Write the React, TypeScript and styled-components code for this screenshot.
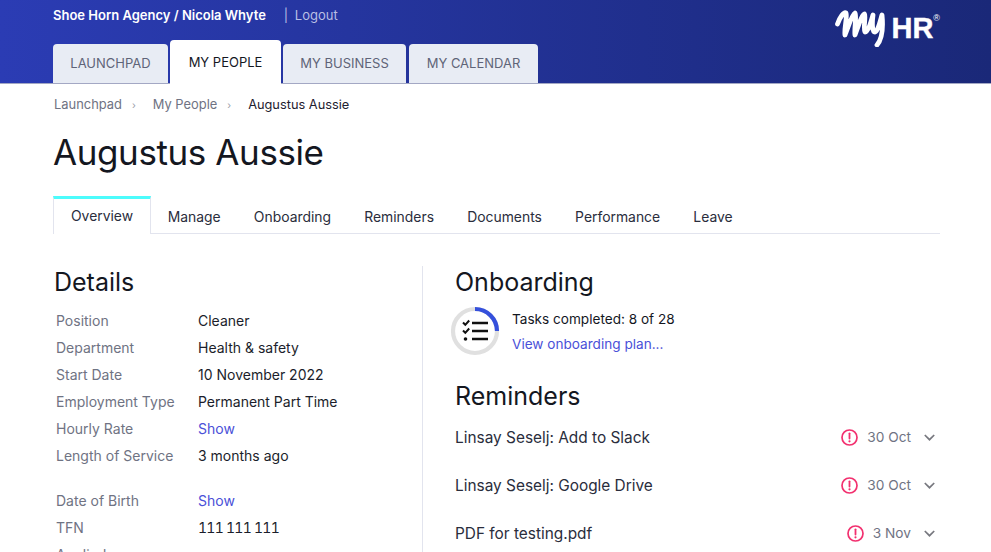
import React from "react";
import styled, { createGlobalStyle } from "styled-components";

const Global = createGlobalStyle`
  html, body { margin: 0; padding: 0; height: 552px; overflow: hidden; background: #fff; }
  body { font-family: Inter, "Liberation Sans", sans-serif; color: #14171f; }
`;

const Page = styled.div`
  width: 991px;
  height: 552px;
  overflow: hidden;
`;

const Header = styled.header`
  height: 84px;
  box-sizing: border-box;
  padding: 0 51px 0 53px;
  display: flex;
  justify-content: space-between;
  background: linear-gradient(90deg, #2b3cb4 0%, #1a2878 100%);
  border-bottom: 1px solid #a3a8c4;
`;

const HeaderLeft = styled.div`
  display: flex;
  flex-direction: column;
`;

const UserLine = styled.div`
  height: 40px;
  padding-top: 7px;
  box-sizing: border-box;
  display: flex;
  font-size: 13px;
  line-height: 16px;
`;

const UserName = styled.span`
  color: #fff;
  font-weight: 600;
`;

const Logout = styled.span`
  margin-left: 18px;
  color: #b9bfe4;
  word-spacing: 3px;
`;

const NavTabs = styled.nav`
  display: flex;
  align-items: flex-end;
  height: 43px;
`;

const NavTab = styled.div<{ $active?: boolean; $w: number; $gap: number }>`
  box-sizing: border-box;
  width: ${(p) => p.$w}px;
  margin-right: ${(p) => p.$gap}px;
  height: ${(p) => (p.$active ? 44 : 39)}px;
  margin-bottom: ${(p) => (p.$active ? -1 : 0)}px;
  padding-bottom: ${(p) => (p.$active ? 0 : 2)}px;
  border-radius: 4px 4px 0 0;
  background: ${(p) => (p.$active ? "#fff" : "#e8ecf4")};
  color: ${(p) => (p.$active ? "#14171f" : "#5f6478")};
  font-size: 13px;
  display: flex;
  align-items: center;
  justify-content: center;
`;

const Logo = styled.div`
  margin-top: 9px;
  display: flex;
  align-items: flex-start;
  height: 38px;
`;

const LogoText = styled.span`
  color: #fff;
  font-family: "Liberation Sans", sans-serif;
  font-weight: 700;
  font-size: 29px;
  line-height: 32px;
  margin-top: 3px;
  -webkit-text-stroke: 0.4px #fff;
`;

const LogoMarkR = styled.span`
  color: #fff;
  font-family: "Liberation Sans", sans-serif;
  font-size: 9px;
  line-height: 10px;
  margin: 4px 0 0 0;
`;

const Main = styled.main`
  padding: 0 51px 0 53px;
`;

const Breadcrumbs = styled.div`
  height: 41px;
  display: flex;
  align-items: center;
  padding-left: 1px;
  font-size: 12.9px;
  color: #6f7383;
`;

const Sep = styled.span`
  margin: 0 17px 0 10px;
  font-size: 10px;
  color: #9a9da8;
`;

const Current = styled.span`
  color: #1e2130;
  font-size: 12.8px;
`;

const Title = styled.h1`
  margin: 0;
  height: 71px;
  font-size: 35px;
  line-height: 54px;
  font-weight: 400;
  letter-spacing: -0.4px;
`;

const TabBar = styled.div`
  display: flex;
  height: 37px;
  border-bottom: 1px solid #e2e4ee;
`;

const Tab = styled.div<{ $active?: boolean }>`
  box-sizing: border-box;
  height: ${(p) => (p.$active ? 38 : 37)}px;
  padding: ${(p) => (p.$active ? "0 17px 2px" : "5px 16.6px 0")};
  display: flex;
  align-items: center;
  font-size: 13.9px;
  color: #2a2d3c;
  ${(p) =>
    p.$active
      ? `background:#fff;border-top:3px solid #4dfcfc;border-left:1px solid #e2e4ee;border-right:1px solid #e2e4ee;`
      : ""}
`;

const Columns = styled.div`
  display: grid;
  grid-template-columns: 370px 1fr;
  margin-top: 32px;
`;

const LeftCol = styled.section`
  border-right: 1px solid #e2e4ee;
  height: 300px;
  padding-left: 1px;
`;

const RightCol = styled.section`
  padding-left: 32px;
`;

const Heading = styled.h2`
  margin: 0;
  font-size: 25px;
  line-height: 32px;
  font-weight: 400;
  color: #14171f;
`;

const Rows = styled.dl<{ $gap?: number }>`
  margin: 0;
  margin-top: ${(p) => p.$gap ?? 0}px;
  display: grid;
  grid-template-columns: 142px 1fr;
  grid-auto-rows: 27px;
  padding-left: 2px;
  font-size: 14px;
  line-height: 27px;
`;

const Label = styled.dt`
  color: #6f7383;
`;

const Value = styled.dd<{ $tabular?: boolean }>`
  margin: 0;
  color: #1b1e2b;
  font-variant-numeric: ${(p) => (p.$tabular ? "tabular-nums" : "normal")};
  letter-spacing: ${(p) => (p.$tabular ? "-0.75px" : "normal")};
`;

const LinkText = styled.span`
  color: #4a50d8;
`;

const Progress = styled.div`
  display: flex;
  align-items: center;
  gap: 12px;
  margin-left: -5px;
  margin-top: 7px;
`;

const ProgressText = styled.div`
  font-size: 13.6px;
  line-height: 25px;
  padding-top: 2px;
`;

const ReminderBlock = styled.div`
  margin-top: 23px;
`;

const ReminderList = styled.div`
  margin-top: 1px;
  padding-right: 5px;
`;

const ReminderRow = styled.div`
  height: 48px;
  display: flex;
  align-items: center;
  font-size: 15.4px;
`;

const ReminderName = styled.span`
  flex: 1;
  color: #2a2d3c;
`;

const ReminderDate = styled.span`
  font-size: 13.7px;
  color: #6f7383;
  margin: 0 13px 0 9px;
`;

const Chevron = () => (
  <svg width="11" height="7" viewBox="0 0 11 7" fill="none" stroke="#77787f" strokeWidth="1.7">
    <path d="M.8 1 5.5 5.7 10.2 1" />
  </svg>
);

const Alert = () => (
  <svg width="17" height="17" viewBox="0 0 17 17" fill="none">
    <circle cx="8.5" cy="8.5" r="7.5" stroke="#f2306f" strokeWidth="1.7" />
    <path d="M8.5 4.3v5.2" stroke="#f2306f" strokeWidth="1.8" strokeLinecap="round" />
    <circle cx="8.5" cy="12.3" r="1.1" fill="#f2306f" />
  </svg>
);

const TaskRing = () => (
  <svg width="50" height="50" viewBox="0 0 50 50" fill="none">
    <circle cx="25" cy="25" r="22" stroke="#e0e0e0" strokeWidth="4.2" />
    <path d="M25 3a22 22 0 0 1 22 22" stroke="#3550dc" strokeWidth="4.2" />
    <path d="M13 16.5l2.3 2.3 3.9-4.3M13 24.5l2.3 2.3 3.9-4.3" stroke="#111" strokeWidth="2" />
    <circle cx="15.5" cy="33" r="1.8" fill="#111" />
    <path d="M22 17h16M22 25h16M22 33h16" stroke="#111" strokeWidth="2.3" />
  </svg>
);

const LogoMark = () => (
  <svg width="56" height="38" viewBox="0 0 56 38" fill="none" stroke="#fff" strokeWidth="4.8" strokeLinecap="round" strokeLinejoin="round">
    <path d="M2.5 15C5 8 9 2.5 11 4 12.5 8 9 20 10 26 13 19 17 5 20 4 22 6 19 20 20 26 23 18 27 5 29.5 5 31 8 28 19 30 23 33 23 36 13 38 6 37 14 37 23 40 23 43 22 45 13 47 6 48 16 48 29 42 36" />
  </svg>
);

const nav = [
  ["LAUNCHPAD", 115, 2],
  ["MY PEOPLE", 111, 2],
  ["MY BUSINESS", 123, 3],
  ["MY CALENDAR", 129, 0],
] as const;

const tabs = ["Overview", "Manage", "Onboarding", "Reminders", "Documents", "Performance", "Leave"];

const reminders = [
  ["Linsay Seselj: Add to Slack", "30 Oct"],
  ["Linsay Seselj: Google Drive", "30 Oct"],
  ["PDF for testing.pdf", "3 Nov"],
];

export default function App() {
  return (
    <Page>
      <Global />
      <Header>
        <HeaderLeft>
          <UserLine>
            <UserName>Shoe Horn Agency / Nicola Whyte</UserName>
            <Logout>| Logout</Logout>
          </UserLine>
          <NavTabs>
            {nav.map(([n, w, g], i) => (
              <NavTab key={n} $w={w} $gap={g} $active={i === 1}>
                {n}
              </NavTab>
            ))}
          </NavTabs>
        </HeaderLeft>
        <Logo>
          <LogoMark />
          <LogoText>HR</LogoText>
          <LogoMarkR>®</LogoMarkR>
        </Logo>
      </Header>
      <Main>
        <Breadcrumbs>
          Launchpad<Sep>›</Sep>My People<Sep>›</Sep>
          <Current>Augustus Aussie</Current>
        </Breadcrumbs>
        <Title>Augustus Aussie</Title>
        <TabBar>
          {tabs.map((t, i) => (
            <Tab key={t} $active={i === 0}>
              {t}
            </Tab>
          ))}
        </TabBar>
        <Columns>
          <LeftCol>
            <Heading>Details</Heading>
            <Rows $gap={9}>
              <Label>Position</Label><Value>Cleaner</Value>
              <Label>Department</Label><Value>Health &amp; safety</Value>
              <Label>Start Date</Label><Value>10 November 2022</Value>
              <Label>Employment Type</Label><Value>Permanent Part Time</Value>
              <Label>Hourly Rate</Label><Value><LinkText>Show</LinkText></Value>
              <Label>Length of Service</Label><Value>3 months ago</Value>
            </Rows>
            <Rows $gap={18}>
              <Label>Date of Birth</Label><Value><LinkText>Show</LinkText></Value>
              <Label>TFN</Label><Value $tabular>111 111 111</Value>
              <Label>Applied</Label><Value />
            </Rows>
          </LeftCol>
          <RightCol>
            <Heading>Onboarding</Heading>
            <Progress>
              <TaskRing />
              <ProgressText>
                Tasks completed: 8 of 28
                <br />
                <LinkText>View onboarding plan...</LinkText>
              </ProgressText>
            </Progress>
            <ReminderBlock>
              <Heading>Reminders</Heading>
              <ReminderList>
                {reminders.map(([n, d]) => (
                  <ReminderRow key={n}>
                    <ReminderName>{n}</ReminderName>
                    <Alert />
                    <ReminderDate>{d}</ReminderDate>
                    <Chevron />
                  </ReminderRow>
                ))}
              </ReminderList>
            </ReminderBlock>
          </RightCol>
        </Columns>
      </Main>
    </Page>
  );
}
